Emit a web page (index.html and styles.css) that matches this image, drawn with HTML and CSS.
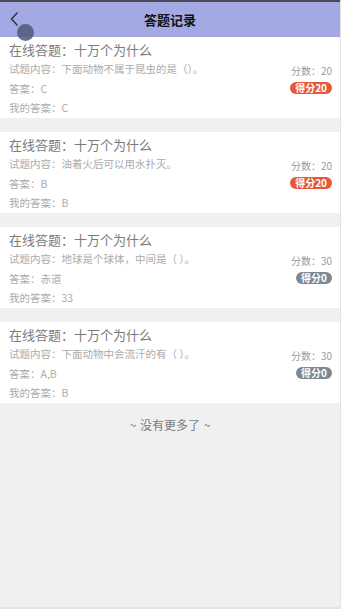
FILE: index.html
```html
<!DOCTYPE html>
<html lang="zh">
<head>
<meta charset="utf-8">
<link rel="stylesheet" href="styles.css">
</head>
<body>
<div class="page">
  <div class="topline"></div>
  <header class="header">
    <svg class="back" width="12" height="16" viewBox="0 0 12 16"><path d="M8.5 1.5 L2.5 8 L8.5 14.5" fill="none" stroke="#2a2a3a" stroke-width="1.3"/></svg>
    <span class="title">答题记录</span>
    <span class="touch"></span>
  </header>
  <main class="list">
    <div class="card">
      <div class="left">
        <div class="ctitle">在线答题：十万个为什么</div>
        <div class="line">试题内容：下面动物不属于昆虫的是（）。</div>
        <div class="line">答案：C</div>
        <div class="line">我的答案：C</div>
      </div>
      <div class="right">
        <div class="score">分数：20</div>
        <div class="badge red">得分20</div>
      </div>
    </div>
    <div class="card">
      <div class="left">
        <div class="ctitle">在线答题：十万个为什么</div>
        <div class="line">试题内容：油着火后可以用水扑灭。</div>
        <div class="line">答案：B</div>
        <div class="line">我的答案：B</div>
      </div>
      <div class="right">
        <div class="score">分数：20</div>
        <div class="badge red">得分20</div>
      </div>
    </div>
    <div class="card">
      <div class="left">
        <div class="ctitle">在线答题：十万个为什么</div>
        <div class="line">试题内容：地球是个球体，中间是（ ）。</div>
        <div class="line">答案：赤道</div>
        <div class="line">我的答案：33</div>
      </div>
      <div class="right">
        <div class="score">分数：30</div>
        <div class="badge gray">得分0</div>
      </div>
    </div>
    <div class="card">
      <div class="left">
        <div class="ctitle">在线答题：十万个为什么</div>
        <div class="line">试题内容：下面动物中会流汗的有（ ）。</div>
        <div class="line">答案：A,B</div>
        <div class="line">我的答案：B</div>
      </div>
      <div class="right">
        <div class="score">分数：30</div>
        <div class="badge gray">得分0</div>
      </div>
    </div>
    <div class="more">~ 没有更多了 ~</div>
  </main>
</div>
</body>
</html>
```
FILE: styles.css
```css
* { box-sizing: border-box; }
html, body { margin: 0; padding: 0; }
body {
  width: 341px;
  height: 609px;
  overflow: hidden;
  background: #f0f0f0;
  font-family: "Noto Sans CJK SC", "Noto Sans", sans-serif;
}
.page {
  height: 609px;
  border-right: 1px solid #e2e2e2;
  border-bottom: 2px solid #e4e4e4;
}
.topline { height: 2px; background: #4a4a55; }
.header {
  position: relative;
  height: 35px;
  background: #a3a9e2;
  display: flex;
  align-items: center;
  justify-content: center;
}
.back { position: absolute; left: 9px; top: 9px; }
.title { font-size: 13px; font-weight: bold; color: #111; }
.touch {
  position: absolute;
  left: 17px;
  top: 22px;
  width: 17px;
  height: 17px;
  border-radius: 50%;
  background: rgba(80, 88, 125, 0.85);
  filter: blur(0.6px);
}
.list { display: flex; flex-direction: column; gap: 14px; }
.card {
  height: 81px;
  background: #fff;
  display: flex;
  justify-content: space-between;
  padding: 4px 8px 0 9px;
}
.ctitle { font-size: 13px; line-height: 18px; color: #7b7b7b; }
.line { font-size: 10.5px; line-height: 19.5px; color: #ababab; }
.right {
  display: flex;
  flex-direction: column;
  align-items: flex-end;
  padding-top: 23px;
}
.score { font-size: 10px; line-height: 14px; color: #9a9a9a; }
.badge {
  margin-top: 4px;
  height: 12px;
  line-height: 12px;
  padding: 0 5px;
  border-radius: 6px;
  font-size: 10px;
  font-weight: bold;
  color: #fff;
}
.badge.red { background: #e5583b; }
.badge.gray { background: #7c8995; }
.more {
  margin-top: 1px;
  text-align: center;
  font-size: 12px;
  line-height: 14px;
  word-spacing: 1px;
  color: #7a7a7a;
}
```
